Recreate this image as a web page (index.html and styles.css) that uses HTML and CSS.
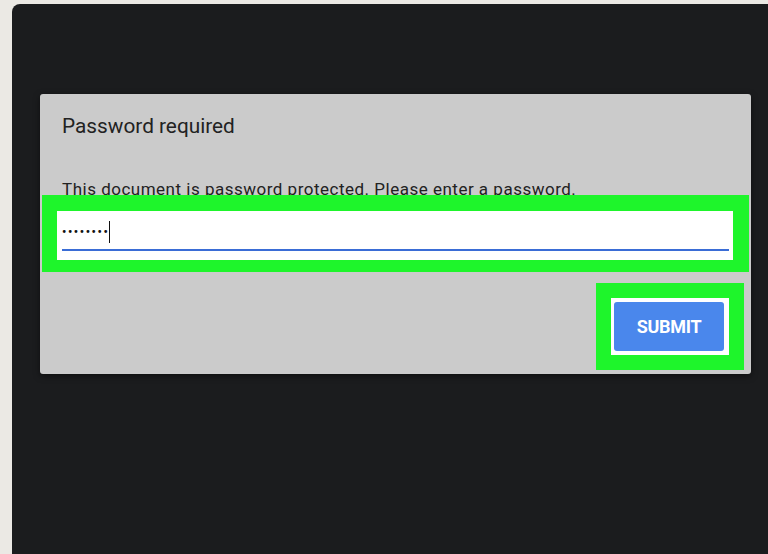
FILE: index.html
```html
<!DOCTYPE html>
<html>
<head>
<meta charset="utf-8">
<link rel="stylesheet" href="styles.css">
</head>
<body>
<div class="screen">
  <div class="dialog">
    <div class="title">Password required</div>
    <div class="desc">This document is password protected. Please enter a password.</div>
    <div class="hl hl-input">
      <div class="input">
        <div class="value"><span class="dots">••••••••</span><span class="caret"></span></div>
        <div class="underline"></div>
      </div>
    </div>
    <div class="actions">
      <div class="hl hl-btn">
        <div class="btn-frame">
          <div class="btn">SUBMIT</div>
        </div>
      </div>
    </div>
  </div>
</div>
</body>
</html>
```
FILE: styles.css
```css
html, body {
  margin: 0;
  padding: 0;
  background: #ebe9e4;
  width: 768px;
  height: 554px;
  overflow: hidden;
  font-family: Roboto, "Liberation Sans", sans-serif;
}
.screen {
  margin: 4px 0 0 12px;
  height: 550px;
  background: #1b1c1e;
  border-radius: 8px 0 0 0;
  padding-top: 90px;
  box-sizing: border-box;
}
.dialog {
  margin-left: 28px;
  width: 711px;
  height: 280px;
  background: #cbcbcb;
  border-radius: 3px;
  box-shadow: 0 2px 6px rgba(0,0,0,0.5);
  padding-top: 20px;
  box-sizing: border-box;
}
.title {
  padding-left: 22px;
  font-size: 20.8px;
  line-height: 24px;
  color: #222;
}
.desc {
  margin-top: 41px;
  padding-left: 22px;
  font-size: 17px;
  letter-spacing: 0.5px;
  line-height: 20px;
  color: #222;
  white-space: nowrap;
}
.hl {
  background: #1ef52b;
  position: relative;
  box-sizing: border-box;
}
.hl-input {
  margin: -4px 2px 0 2px;
  height: 77px;
  padding: 16px 16px 12px 15px;
}
.input {
  background: #fff;
  height: 49px;
  padding: 0 4px 0 5px;
  box-sizing: border-box;
  display: flex;
  flex-direction: column;
}
.value {
  height: 38px;
  display: flex;
  align-items: center;
  padding-top: 4px;
  box-sizing: border-box;
}
.dots {
  font-size: 12px;
  letter-spacing: 1.6px;
  color: #111;
  line-height: 12px;
  font-weight: 700;
}
.caret {
  width: 1px;
  height: 22px;
  background: #111;
  margin-left: 0;
}
.underline {
  height: 2px;
  background: #3a6dd6;
}
.actions {
  display: flex;
  justify-content: flex-end;
  margin-top: 11px;
  padding-right: 7px;
}
.hl-btn {
  width: 148px;
  height: 87px;
  padding: 15px;
}
.btn-frame {
  background: #fff;
  height: 57px;
  padding: 4px 5px 4px 3px;
  box-sizing: border-box;
}
.btn {
  background: #4a87ec;
  height: 49px;
  border-radius: 3px;
  color: #fff;
  font-size: 18px;
  font-weight: 700;
  display: flex;
  align-items: center;
  justify-content: center;
  letter-spacing: -0.3px;
  padding-bottom: 1px;
  box-sizing: border-box;
}
```
